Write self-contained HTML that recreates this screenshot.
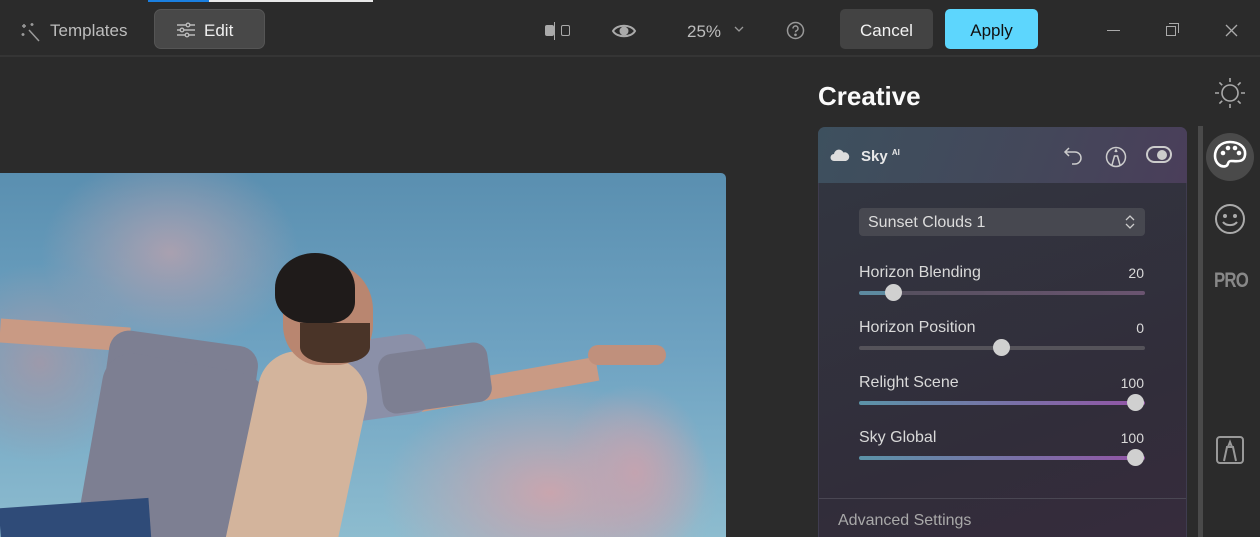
<!DOCTYPE html>
<html><head><meta charset="utf-8"><style>
*{margin:0;padding:0;box-sizing:border-box}
body{width:1260px;height:537px;overflow:hidden;background:#2b2b2b;font-family:"Liberation Sans",sans-serif;position:relative;color:#ddd}
.abs{position:absolute}
.top{left:0;top:0;width:1260px;height:57px;background:#2b2b2b;border-bottom:2px solid #353535}
.lbl{font-size:17px;color:#d8d8d8}
.slider{position:absolute;left:859px;width:286px;height:4px;border-radius:2px}
.knob{position:absolute;width:17px;height:17px;border-radius:50%;background:#d0d0d0}
.sl{position:absolute;left:859px;font-size:16px;color:#d9d9d9}
.sv{position:absolute;right:116px;font-size:14px;color:#d9d9d9}
</style></head><body>
<div class="abs top"></div>
<div class="abs" style="left:148px;top:0;width:61px;height:2px;background:#1a7fe0"></div>
<div class="abs" style="left:209px;top:0;width:164px;height:2px;background:#e8e8e8"></div>
<svg class="abs" style="left:20px;top:21px" width="22" height="22" viewBox="0 0 22 22" fill="none" stroke="#9a9a9a" stroke-width="1.5"><path d="M9 9l10 11"/><path d="M4 3v4M2 5h4M12 2v3M10.5 3.5h3M3 12v3M1.5 13.5h3"/></svg>
<div class="abs lbl" style="left:50px;top:21px;color:#bdbdbd">Templates</div>
<div class="abs" style="left:154px;top:9px;width:111px;height:40px;border-radius:7px;background:#484848;border:1px solid #555"></div>
<svg class="abs" style="left:176px;top:22px" width="20" height="16" viewBox="0 0 20 16" stroke="#bbb" stroke-width="1.4" fill="none"><path d="M1 3h18M1 8h18M1 13h18"/><circle cx="12" cy="3" r="1.8" fill="#484848"/><circle cx="6" cy="8" r="1.8" fill="#484848"/><circle cx="11" cy="13" r="1.8" fill="#484848"/></svg>
<div class="abs lbl" style="left:204px;top:21px;color:#f0f0f0">Edit</div>
<div class="abs" style="left:545px;top:25px;width:9px;height:11px;background:#aaa;border-radius:2px"></div>
<div class="abs" style="left:554px;top:22px;width:1px;height:18px;background:#aaa"></div>
<div class="abs" style="left:561px;top:25px;width:9px;height:11px;border:1.5px solid #aaa;border-radius:2px"></div>
<svg class="abs" style="left:611px;top:21px" width="26" height="20" viewBox="0 0 26 20" fill="none" stroke="#aaa" stroke-width="2"><path d="M2 10C6 3 20 3 24 10C20 17 6 17 2 10Z"/><circle cx="13" cy="10" r="3.5" fill="#aaa"/></svg>
<div class="abs lbl" style="left:687px;top:22px;color:#bdbdbd">25%</div>
<svg class="abs" style="left:733px;top:25px" width="12" height="8" viewBox="0 0 12 8" fill="none" stroke="#999" stroke-width="1.3"><path d="M2 2l4 4 4-4"/></svg>
<svg class="abs" style="left:786px;top:21px" width="19" height="19" viewBox="0 0 19 19" fill="none" stroke="#999" stroke-width="1.5"><circle cx="9.5" cy="9.5" r="8"/><path d="M7 7.5a2.5 2.5 0 1 1 3.3 2.3c-.6.3-.8.7-.8 1.4"/><circle cx="9.5" cy="13.8" r=".6" fill="#999"/></svg>
<div class="abs" style="left:840px;top:9px;width:93px;height:40px;border-radius:5px;background:#434343;color:#f2f2f2;font-size:17px;text-align:center;line-height:44px">Cancel</div>
<div class="abs" style="left:945px;top:9px;width:93px;height:40px;border-radius:5px;background:#5dd6fd;color:#111;font-size:17px;text-align:center;line-height:44px">Apply</div>
<div class="abs" style="left:1107px;top:30px;width:13px;height:1px;background:#aaa"></div>
<div class="abs" style="left:1166px;top:26px;width:10px;height:10px;border:1.3px solid #aaa"></div>
<div class="abs" style="left:1169px;top:23px;width:10px;height:10px;border-top:1.3px solid #aaa;border-right:1.3px solid #aaa"></div>
<svg class="abs" style="left:1225px;top:24px" width="13" height="13" stroke="#aaa" stroke-width="1.3"><path d="M1 1l11 11M12 1L1 12"/></svg>
<!-- photo -->
<div class="abs" style="left:0;top:173px;width:726px;height:364px;border-top-right-radius:5px;overflow:hidden;background:linear-gradient(180deg,#5a8fb0 0%,#6fa3c2 50%,#8dbccf 100%)">
 <div class="abs" style="left:40px;top:-20px;width:260px;height:200px;border-radius:50%;background:radial-gradient(#a9a0b0,rgba(160,150,170,0) 70%)"></div>
 <div class="abs" style="left:-60px;top:90px;width:200px;height:200px;border-radius:50%;background:radial-gradient(#9d9aab,rgba(150,150,170,0) 70%)"></div>
 <div class="abs" style="left:380px;top:210px;width:340px;height:220px;border-radius:50%;background:radial-gradient(#c9a5ae,rgba(200,160,170,0) 70%)"></div>
 <div class="abs" style="left:560px;top:210px;width:150px;height:180px;border-radius:50%;background:radial-gradient(#c3a3b0,rgba(190,160,170,0) 70%)"></div>
 <div class="abs" style="left:0;top:150px;width:130px;height:24px;background:#c99a84;transform:rotate(4deg)"></div>
 <div class="abs" style="left:420px;top:215px;width:180px;height:24px;background:#c99a84;transform:rotate(-10deg);transform-origin:left"></div>
 <div class="abs" style="left:588px;top:172px;width:78px;height:20px;border-radius:10px;background:#c0907c"></div>
 <div class="abs" style="left:105px;top:165px;width:150px;height:90px;background:#7d7f92;border-radius:20px;transform:rotate(8deg)"></div>
 <div class="abs" style="left:90px;top:190px;width:180px;height:190px;background:#7d7f92;border-radius:30px 50px 0 0;transform:rotate(10deg)"></div>
 <div class="abs" style="left:330px;top:165px;width:100px;height:80px;background:#8b90a8;border-radius:20px;transform:rotate(-8deg)"></div>
 <div class="abs" style="left:380px;top:175px;width:110px;height:60px;background:#7d7f92;border-radius:14px;transform:rotate(-8deg)"></div>
 <div class="abs" style="left:245px;top:180px;width:110px;height:200px;background:#d3b49c;border-radius:40px 40px 0 0;transform:rotate(12deg)"></div>
 <div class="abs" style="left:283px;top:92px;width:90px;height:100px;background:#b98670;border-radius:45% 45% 40% 40%"></div>
 <div class="abs" style="left:275px;top:80px;width:80px;height:70px;background:#1f1b1a;border-radius:50% 50% 30% 40%"></div>
 <div class="abs" style="left:300px;top:150px;width:70px;height:40px;background:#4a3428;border-radius:0 0 40% 40%"></div>
 <div class="abs" style="left:0;top:330px;width:150px;height:40px;background:#2f4b78;transform:rotate(-4deg)"></div>
</div>
<!-- right panel -->
<div class="abs" style="left:818px;top:81px;font-size:26px;font-weight:bold;color:#fafafa">Creative</div>
<div class="abs" style="left:818px;top:127px;width:369px;height:410px;border-radius:7px 7px 0 0;border:1px solid #3f3c4f;border-bottom:none;background:linear-gradient(160deg,#323741,#312d3a 70%,#362c3c)"></div>
<div class="abs" style="left:818px;top:127px;width:369px;height:56px;border-radius:7px 7px 0 0;background:linear-gradient(110deg,#3d505e,#44475a 60%,#4a3e5a)"></div>
<svg class="abs" style="left:830px;top:148px" width="20" height="14" viewBox="0 0 20 14"><path d="M4 13a3.5 3.5 0 0 1 0-7 5 5 0 0 1 9.5-1.5A4.2 4.2 0 0 1 16 13Z" fill="#ddd"/></svg>
<div class="abs" style="left:861px;top:148px;font-size:15px;font-weight:bold;color:#e8e8e8">Sky <sup style="font-size:8px">AI</sup></div>
<svg class="abs" style="left:1063px;top:145px" width="22" height="22" viewBox="0 0 22 22" fill="none" stroke="#ccc" stroke-width="1.5"><path d="M6 3L2 7l4 4"/><path d="M2 7h10a6 6 0 0 1 0 12H9"/></svg>
<svg class="abs" style="left:1105px;top:146px" width="22" height="22" viewBox="0 0 22 22" fill="none" stroke="#ccc" stroke-width="1.5"><circle cx="11" cy="11" r="9.5"/><path d="M7 19l2.5-9h3l2.5 9M10 6l1-2 1 2"/></svg>
<div class="abs" style="left:1146px;top:146px;width:26px;height:17px;border:2px solid #ccc;border-radius:9px"></div>
<div class="abs" style="left:1157px;top:150px;width:10px;height:10px;border-radius:50%;background:#ccc"></div>
<div class="abs" style="left:859px;top:208px;width:286px;height:28px;border-radius:4px;background:#474850"></div>
<div class="abs" style="left:868px;top:214px;font-size:16px;color:#dcdcdc">Sunset Clouds 1</div>
<svg class="abs" style="left:1124px;top:214px" width="12" height="16" viewBox="0 0 12 16" fill="none" stroke="#ccc" stroke-width="1.3"><path d="M2 6l4-4 4 4M2 10l4 4 4-4"/></svg>

<div class="sl" style="top:264px">Horizon Blending</div><div class="sv" style="top:265px">20</div>
<div class="slider" style="top:291px;background:linear-gradient(90deg,#5d8aa0 0 12%,#55505e 12%,#6a5470)"></div>
<div class="knob" style="left:885px;top:284px"></div>
<div class="sl" style="top:319px">Horizon Position</div><div class="sv" style="top:320px">0</div>
<div class="slider" style="top:346px;background:#55535a"></div>
<div class="knob" style="left:993px;top:339px"></div>
<div class="sl" style="top:374px">Relight Scene</div><div class="sv" style="top:375px">100</div>
<div class="slider" style="top:401px;background:linear-gradient(90deg,#5b93a8,#9354a6)"></div>
<div class="knob" style="left:1127px;top:394px"></div>
<div class="sl" style="top:429px">Sky Global</div><div class="sv" style="top:430px">100</div>
<div class="slider" style="top:456px;background:linear-gradient(90deg,#5b93a8,#9354a6)"></div>
<div class="knob" style="left:1127px;top:449px"></div>
<div class="abs" style="left:819px;top:498px;width:367px;height:1px;background:#4a4753"></div>
<div class="abs" style="left:838px;top:512px;font-size:16px;color:#a9a9a9">Advanced Settings</div>
<div class="abs" style="left:1198px;top:126px;width:5px;height:411px;background:#4a4a4a"></div>
<svg class="abs" style="left:1212px;top:75px" width="36" height="36" viewBox="0 0 36 36" fill="none" stroke="#aaa" stroke-width="1.6"><circle cx="18" cy="18" r="8"/><path d="M18 3v4M18 29v4M3 18h4M29 18h4M7.4 7.4l2.8 2.8M25.8 25.8l2.8 2.8M7.4 28.6l2.8-2.8M25.8 10.2l2.8-2.8"/></svg>
<div class="abs" style="left:1206px;top:133px;width:48px;height:48px;border-radius:50%;background:#4a4a4a"></div>
<svg class="abs" style="left:1213px;top:140px" width="34" height="34" viewBox="0 0 34 34"><path d="M17 2C8 2 2 8 2 16c0 7 6 12 11 10 3-1 1-5 5-5 5 0 13 2 14-6C33 7 26 2 17 2Z" fill="none" stroke="#fff" stroke-width="2.6"/><circle cx="10" cy="13" r="2.3" fill="#fff"/><circle cx="15" cy="8" r="2.3" fill="#fff"/><circle cx="22" cy="8" r="2.3" fill="#fff"/><circle cx="26" cy="13" r="2.3" fill="#fff"/></svg>
<svg class="abs" style="left:1214px;top:203px" width="32" height="32" viewBox="0 0 32 32" fill="none" stroke="#aaa" stroke-width="2"><circle cx="16" cy="16" r="14"/><circle cx="11" cy="13" r="1" fill="#aaa"/><circle cx="21" cy="13" r="1" fill="#aaa"/><path d="M9 19a8 6 0 0 0 14 0"/></svg>
<div class="abs" style="left:1214px;top:269px;font-size:21px;font-weight:bold;color:#888;transform:scaleX(.8);transform-origin:left;letter-spacing:-1px">PRO</div>
<svg class="abs" style="left:1215px;top:435px" width="30" height="30" viewBox="0 0 30 30" fill="none" stroke="#999" stroke-width="2"><rect x="2" y="2" width="26" height="26" rx="3"/><path d="M9 26l3-14h6l3 14M13 12l2-5 2 5"/></svg>
</body></html>
